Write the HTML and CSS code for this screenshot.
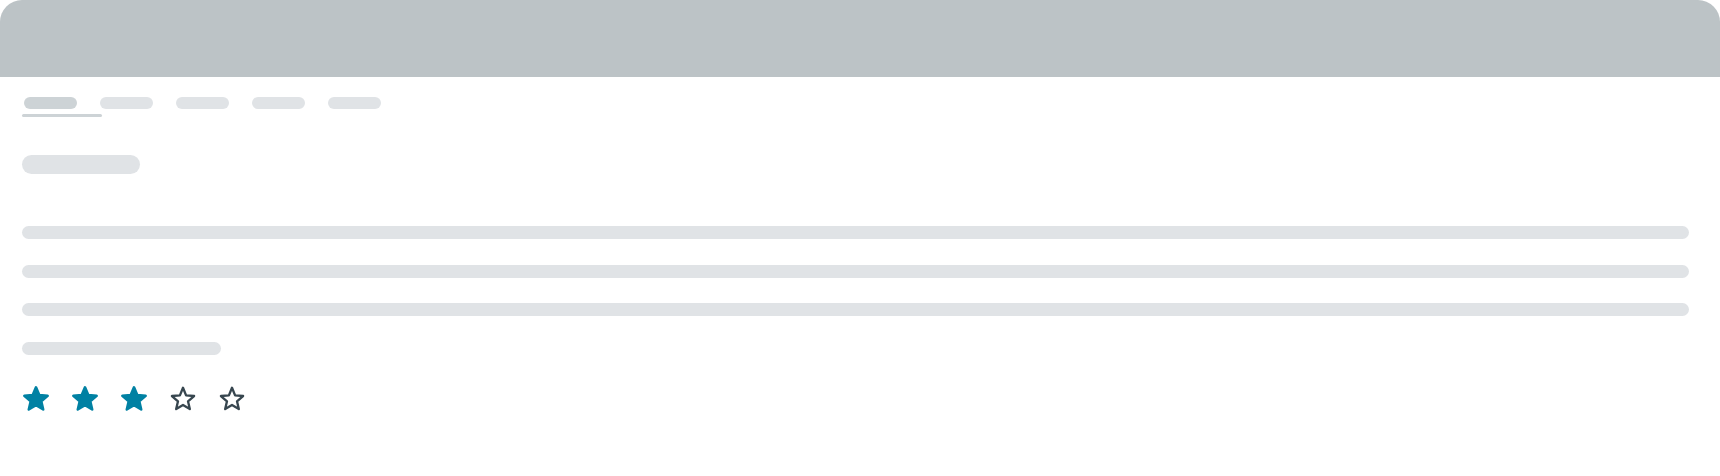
FILE: index.html
```html
<!DOCTYPE html>
<html lang="en">
<head>
<meta charset="utf-8">
<title>Review skeleton</title>
<link rel="stylesheet" href="styles.css">
</head>
<body>
<div class="card">
  <div class="card-header"></div>
  <div class="tabs">
    <div class="tab active"><span class="tab-pill"></span><span class="tab-line"></span></div>
    <div class="tab"><span class="tab-pill"></span><span class="tab-line"></span></div>
    <div class="tab"><span class="tab-pill"></span><span class="tab-line"></span></div>
    <div class="tab"><span class="tab-pill"></span><span class="tab-line"></span></div>
    <div class="tab"><span class="tab-pill"></span><span class="tab-line"></span></div>
  </div>
  <div class="content">
    <div class="title-pill"></div>
    <div class="lines">
      <div class="line"></div>
      <div class="line"></div>
      <div class="line"></div>
      <div class="line short"></div>
    </div>
    <div class="stars">
      <svg class="star filled" viewBox="0 0 24 24"><polygon points="12,2 14.81,8.63 22,9.24 16.54,13.97 18.18,21 12,17.27 5.82,21 7.46,13.97 2,9.24 9.19,8.63"/></svg>
      <svg class="star filled" viewBox="0 0 24 24"><polygon points="12,2 14.81,8.63 22,9.24 16.54,13.97 18.18,21 12,17.27 5.82,21 7.46,13.97 2,9.24 9.19,8.63"/></svg>
      <svg class="star filled" viewBox="0 0 24 24"><polygon points="12,2 14.81,8.63 22,9.24 16.54,13.97 18.18,21 12,17.27 5.82,21 7.46,13.97 2,9.24 9.19,8.63"/></svg>
      <svg class="star empty" viewBox="0 0 24 24"><polygon points="12,2.4 14.65,8.9 21.5,9.45 16.3,13.95 17.85,20.6 12,17.1 6.15,20.6 7.7,13.95 2.5,9.45 9.35,8.9"/></svg>
      <svg class="star empty" viewBox="0 0 24 24"><polygon points="12,2.4 14.65,8.9 21.5,9.45 16.3,13.95 17.85,20.6 12,17.1 6.15,20.6 7.7,13.95 2.5,9.45 9.35,8.9"/></svg>
    </div>
  </div>
</div>
</body>
</html>
```

FILE: styles.css
```css
* { box-sizing: border-box; }
html, body { margin: 0; padding: 0; background: #ffffff; font-family: "Liberation Sans", Arial, sans-serif; }
.card { width: 1720px; height: 476px; background: #ffffff; }
.card-header { height: 77px; background: #bcc3c6; border-radius: 22px 22px 0 0; }
.tabs { display: flex; padding-left: 22px; margin-top: 20px; }
.tab { width: 76px; display: flex; flex-direction: column; align-items: flex-start; gap: 5px; }
.tab-pill { display: block; width: 53px; height: 12px; margin-left: 2px; border-radius: 6px; background: #e0e3e6; }
.tab-line { display: block; width: 80px; height: 3px; border-radius: 1.5px; background: transparent; }
.tab.active .tab-pill { background: #cdd3d6; }
.tab.active .tab-line { background: #cdd3d6; }
.content { padding: 38px 31px 0 22px; }
.title-pill { width: 118px; height: 19px; border-radius: 9.5px; background: #e0e3e6; }
.lines { display: flex; flex-direction: column; gap: 25.5px; margin-top: 52px; }
.line { height: 13px; border-radius: 6.5px; background: #e0e3e6; }
.line.short { width: 199px; }
.stars { display: flex; gap: 21px; margin-top: 30px; margin-left: 0; }
.star { width: 28px; height: 28px; display: block; }
.star.filled polygon { fill: #0081a3; stroke: #0081a3; stroke-width: 2.2; stroke-linejoin: round; }
.star.empty polygon { fill: #ffffff; stroke: #37464f; stroke-width: 2; stroke-linejoin: round; }
```
